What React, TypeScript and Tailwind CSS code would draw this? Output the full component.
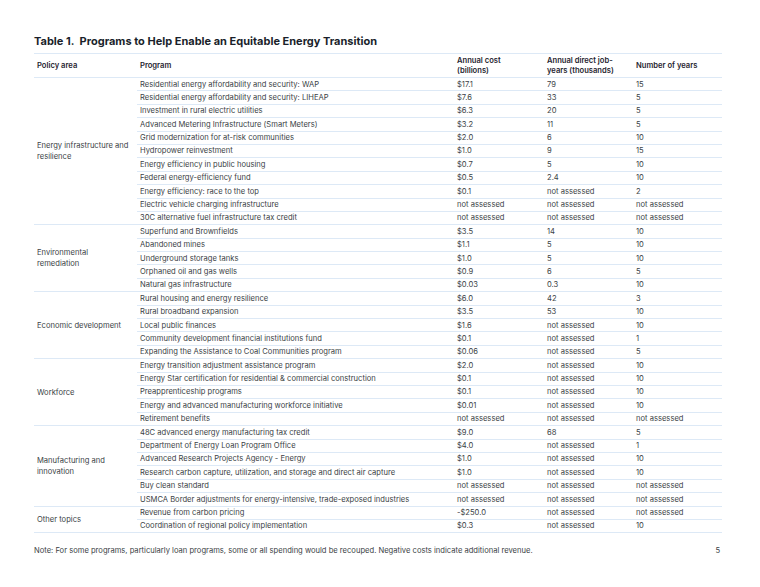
import React from 'react';

type Row = [string, string, string, string];

const groups: { area: string[]; rows: Row[] }[] = [
  {
    area: ['Energy infrastructure and', 'resilience'],
    rows: [
      ['Residential energy affordability and security: WAP', '$17.1', '79', '15'],
      ['Residential energy affordability and security: LIHEAP', '$7.6', '33', '5'],
      ['Investment in rural electric utilities', '$6.3', '20', '5'],
      ['Advanced Metering Infrastructure (Smart Meters)', '$3.2', '11', '5'],
      ['Grid modernization for at-risk communities', '$2.0', '6', '10'],
      ['Hydropower reinvestment', '$1.0', '9', '15'],
      ['Energy efficiency in public housing', '$0.7', '5', '10'],
      ['Federal energy-efficiency fund', '$0.5', '2.4', '10'],
      ['Energy efficiency: race to the top', '$0.1', 'not assessed', '2'],
      ['Electric vehicle charging infrastructure', 'not assessed', 'not assessed', 'not assessed'],
      ['30C alternative fuel infrastructure tax credit', 'not assessed', 'not assessed', 'not assessed'],
    ],
  },
  {
    area: ['Environmental', 'remediation'],
    rows: [
      ['Superfund and Brownfields', '$3.5', '14', '10'],
      ['Abandoned mines', '$1.1', '5', '10'],
      ['Underground storage tanks', '$1.0', '5', '10'],
      ['Orphaned oil and gas wells', '$0.9', '6', '5'],
      ['Natural gas infrastructure', '$0.03', '0.3', '10'],
    ],
  },
  {
    area: ['Economic development'],
    rows: [
      ['Rural housing and energy resilience', '$6.0', '42', '3'],
      ['Rural broadband expansion', '$3.5', '53', '10'],
      ['Local public finances', '$1.6', 'not assessed', '10'],
      ['Community development financial institutions fund', '$0.1', 'not assessed', '1'],
      ['Expanding the Assistance to Coal Communities program', '$0.06', 'not assessed', '5'],
    ],
  },
  {
    area: ['Workforce'],
    rows: [
      ['Energy transition adjustment assistance program', '$2.0', 'not assessed', '10'],
      ['Energy Star certification for residential & commercial construction', '$0.1', 'not assessed', '10'],
      ['Preapprenticeship programs', '$0.1', 'not assessed', '10'],
      ['Energy and advanced manufacturing workforce initiative', '$0.01', 'not assessed', '10'],
      ['Retirement benefits', 'not assessed', 'not assessed', 'not assessed'],
    ],
  },
  {
    area: ['Manufacturing and', 'innovation'],
    rows: [
      ['48C advanced energy manufacturing tax credit', '$9.0', '68', '5'],
      ['Department of Energy Loan Program Office', '$4.0', 'not assessed', '1'],
      ['Advanced Research Projects Agency - Energy', '$1.0', 'not assessed', '10'],
      ['Research carbon capture, utilization, and storage and direct air capture', '$1.0', 'not assessed', '10'],
      ['Buy clean standard', 'not assessed', 'not assessed', 'not assessed'],
      ['USMCA Border adjustments for energy-intensive, trade-exposed industries', 'not assessed', 'not assessed', 'not assessed'],
    ],
  },
  {
    area: ['Other topics'],
    rows: [
      ['Revenue from carbon pricing', '-$250.0', 'not assessed', 'not assessed'],
      ['Coordination of regional policy implementation', '$0.3', 'not assessed', '10'],
    ],
  },
];

const App: React.FC = () => {
  return (
    <div className="w-[760px] h-[587px] bg-white font-['Inter','Liberation_Sans',sans-serif] text-[#3b3f46] overflow-hidden">
      <div className="pl-[34px] pr-[38px] pt-[33px]">
        {/* Title */}
        <h1 className="text-[11px] font-bold text-[#1a1f2b] leading-[16px] mb-[4px]">
          Table 1.&nbsp; Programs to Help Enable an Equitable Energy Transition
        </h1>

        {/* Header */}
        <div className="flex border-t border-b border-[#dde9f6] h-[25px] items-center text-[7.6px] font-semibold text-[#1f2530] leading-[10px]">
          <div className="w-[103px] pl-[3px]">Policy area</div>
          <div className="w-[317px] pl-[3px]">Program</div>
          <div className="w-[90px] pl-[3px]">Annual cost<br />(billions)</div>
          <div className="w-[89px] pl-[3px]">Annual direct job-<br />years (thousands)</div>
          <div className="flex-1 pl-[3px]">Number of years</div>
        </div>

        {/* Body */}
        {groups.map((g) => (
          <div key={g.area.join(' ')} className="flex border-b border-[#dde9f6] text-[7.6px]">
            <div className="w-[103px] pl-[3px] flex flex-col justify-center leading-[11px]">
              {g.area.map((line) => (
                <span key={line}>{line}</span>
              ))}
            </div>
            <div className="flex-1">
              {g.rows.map((r, i) => (
                <div
                  key={r[0]}
                  className={`flex items-center ${i < g.rows.length - 1 ? 'h-[13.4px] border-b border-[#dde9f6]' : 'h-[12.4px]'}`}
                >
                  <div className="w-[317px] pl-[3px] whitespace-nowrap">{r[0]}</div>
                  <div className="w-[90px] pl-[3px]">{r[1]}</div>
                  <div className="w-[89px] pl-[3px]">{r[2]}</div>
                  <div className="flex-1 pl-[3px]">{r[3]}</div>
                </div>
              ))}
            </div>
          </div>
        ))}

        {/* Footer */}
        <div className="flex justify-between mt-[13px] text-[7.6px] leading-[10px]">
          <span>Note: For some programs, particularly loan programs, some or all spending would be recouped. Negative costs indicate additional revenue.</span>
          <span className="pr-[2px]">5</span>
        </div>
      </div>
    </div>
  );
};

export default App;
